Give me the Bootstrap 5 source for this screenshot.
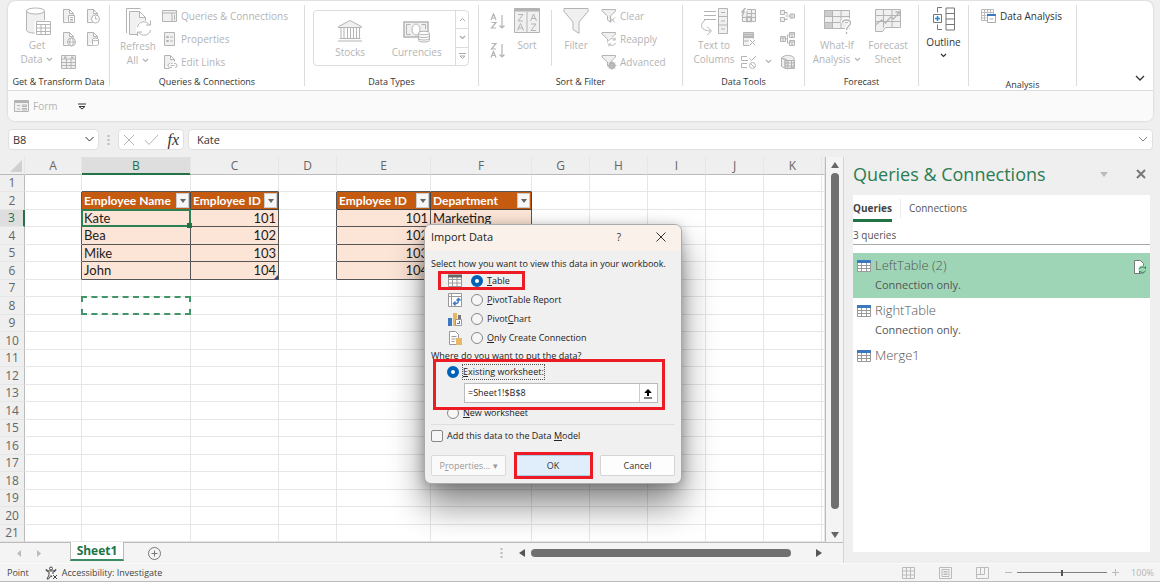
<!DOCTYPE html>
<html lang="en">
<head>
<meta charset="utf-8">
<meta name="viewport" content="width=device-width, initial-scale=1">
<title>Workbook - Import Data</title>
<link href="https://cdn.jsdelivr.net/npm/bootstrap@5.3.0/dist/css/bootstrap.min.css" rel="stylesheet">
<style>
  :root{--ui:"Open Sans","Noto Sans",sans-serif;--cell:Lato,"Open Sans",sans-serif;--green:#217346;--off:#b4b4b4;--rule:#dcdcdc}
  body{background:#efefef;font:10px/14px var(--ui);color:#333;overflow:hidden}
  svg{display:block;fill:none;stroke:currentColor;stroke-width:1;flex:none}
  .btn{--bs-btn-padding-x:0;--bs-btn-padding-y:0;--bs-btn-font-size:10px;--bs-btn-line-height:14px;--bs-btn-border-width:0;--bs-btn-border-radius:2px;--bs-btn-color:#333;--bs-btn-disabled-color:var(--off);--bs-btn-disabled-opacity:1;white-space:nowrap}
  .soft{fill:#f0f0f0}
  .tone-dark{color:#777}.tone-mid{color:#888}.tone-pale{color:#bbb}
  /* ribbon */
  .ribbon{margin:1px 7px 0 8px;background:#fff;border-radius:7px;box-shadow:0 0 2px #bbb}
  .group{height:81px;margin-top:4px;border-right:1px solid var(--rule);position:relative}
  .group-body{height:70px}
  .group-name{font-size:9px;line-height:14px;text-align:center;color:#333;white-space:nowrap}
  .w1{width:102px}.w2{width:195px}.w3{width:174px}.w4{width:204px}.w5{width:122px}.w6{width:114px}.w7{width:50px}.w8{width:108px}
  .big{width:48px;display:flex;flex-direction:column;align-items:center;padding-top:2px}
  .big svg.ic{margin-bottom:3px}
  .big.wide{width:54px}.big.slim{width:42px}
  .stack{display:grid;grid-auto-rows:23px;align-items:center;align-content:start;margin-top:-1px}
  .two{grid-template-columns:16px 16px;column-gap:8px}
  .tools{grid-template-columns:39px 16px}
  .line{display:flex;align-items:center;gap:3px}
  .indent{padding-left:5px}
  .orders{gap:12px;padding:8px 0 0 11px}
  .gallery-wrap{padding:5px 0 0 8px}
  .gallery{width:156px;height:56px;border:1px solid var(--rule);border-radius:4px;padding-left:8px}
  .spin{width:13px;border-left:1px solid var(--rule)}
  .spin .btn{flex:1;display:flex;align-items:center;justify-content:center;color:#aaa}
  .spin .btn+.btn{border-top:1px solid var(--rule);border-radius:0}
  .rule-v{width:1px;height:56px;background:var(--rule);margin:5px 3px 0}
  .quick{height:31px;background:#fafafa;border-top:1px solid var(--rule);border-radius:0 0 7px 7px;padding-left:6px}
  /* formula bar */
  .formula{margin:8px 7px 7px 8px;height:21px}
  .fbox{background:#fff;border:1px solid #e0e0e0;border-radius:4px;height:21px}
  .fbox input{border:0;padding:0;background:none;width:100%;font-size:11px;line-height:17px;color:#333;outline:0}
  .namebox{width:91px}.fxbox{width:66px}
  .fx{font:italic 16px/17px "Liberation Serif",serif}
  /* sheet */
  .sheet{position:relative;overflow:hidden;background:#fff;min-width:0}
  .grid-table{table-layout:fixed;border-collapse:separate;border-spacing:0;width:100%;font-family:var(--cell);font-size:13px;line-height:16px;color:#1c1c1c}
  .grid-table th,.grid-table td{padding:0 2px;border:0 solid #e6e6e6;border-width:0 1px 1px 0;height:17px;position:relative;white-space:nowrap}
  .grid-table th:last-child,.grid-table td:last-child{padding:0}
  .grid-table tbody tr:nth-child(even)>*{height:18px;line-height:17px}
  .grid-table thead th,.grid-table tbody th{background:#efefef;color:#666;font:12px/16px var(--ui);text-align:center}
  .grid-table thead th{border-bottom-color:#bbb;height:18px;line-height:17px}
  .grid-table tbody th{border-right-color:#bbb}
  .grid-table .cur{background:#dedede;color:var(--green)}
  .grid-table thead .cur{box-shadow:inset 0 -1px var(--green);border-bottom-color:var(--green)}
  .grid-table tbody th.cur{border-right:2px solid var(--green)}
  .grid-table .lt{border-right-color:#555}.grid-table .up{border-bottom-color:#555}
  .grid-table .hd{background:#c55a11;color:#fff;font-weight:700;font-size:12px;border-color:#444;padding-right:1px}
  .grid-table .bd{background:#fce4d6;border-color:#555}
  .pick{width:13px;height:15px;background:#f7f7f7;border:1px solid #ccc;padding:0;display:flex;align-items:center;justify-content:center}
  .active-cell::after{content:"";position:absolute;inset:-1px;border:2px solid #2c8055}
  .active-cell::before{content:"";position:absolute;right:-2px;bottom:-2px;width:5px;height:5px;background:var(--green);z-index:2}
  .march::after{content:"";position:absolute;inset:-1px;border:2px dashed #429568}
  .corner::after{content:"";position:absolute;right:0;bottom:0;border:2px solid #2f3f9e;border-top-color:transparent;border-left-color:transparent}
  .c0{width:25px}.ca{width:57px}.cb{width:109px}.cc{width:88px}.cd{width:58px}.ce{width:94px}.cf{width:101px}
  .vbar{width:18px;flex:none;background:#f4f4f4;border-left:1px solid #bbb;padding:5px 0 4px;color:#666}
  .vbar .thumb{width:8px;border-radius:4px;background:#707070;margin:5px 0 23px}
  .solid{fill:currentColor;stroke:none}
  /* tabs */
  .tabs{height:21px;background:#f4f4f4;border-top:1px solid #bbb}
  .sheet-tab{width:54px;height:19px;margin:-1px 0 0;background:#fff;border:solid #bbb;border-width:0 1px;border-bottom:2px solid #3a8a62;color:var(--green);font-weight:700;font-size:12px;line-height:17px;text-align:center;text-decoration:none}
  .hbar{width:303px;margin-right:21px;color:#555}
  .hbar .thumb{height:8px;border-radius:4px;background:#707070;margin:0 25px 0 6px}
  /* pane */
  .pane{width:317px;flex:none;border-left:1px solid #d4d4d4;padding:0 10px 11px 9px;background:#efefef}
  .pane-title{font-size:18px;line-height:26px;font-weight:400;color:#2b7d52;margin:0}
  .pane-body{background:#fff}
  .pane-tab{color:#555;text-decoration:none;line-height:16px;padding:5px 0 3px;border-bottom:3px solid transparent}
  .pane-tab.on{font-weight:700;color:#444;border-color:var(--green)}
  .count{border-bottom:1px solid #aaa;padding:6px 0 2px;line-height:14px;color:#555}
  .query{padding:3px 3px 0 4px;height:45px;color:#6f6f6f;display:flex;gap:4px}
  .query.sel{background:#9fd5b7}
  .qname{font-size:13px;line-height:18px;font-weight:300;color:#555}
  .qnote{font-size:11px;line-height:18px;margin-top:2px;color:#555}
  /* dialog */
  .dialog{position:absolute;left:424px;top:67px;width:258px;background:#f0f0f0;border:1px solid #aaa;border-radius:7px;box-shadow:0 22px 34px rgba(0,0,0,.45),0 2px 12px rgba(0,0,0,.25);font-size:9px;line-height:14px;color:#222}
  .dlg-head{height:26px;background:#f9f1ea;border-radius:6px 6px 0 0;padding:0 14px 2px 6px;font-size:11px}
  .dlg-head .btn+.btn{margin-left:34px}
  .dlg-body{padding:6px 6px 7px}
  .opt{height:19px;display:flex;align-items:center;gap:4px;padding-left:17px;position:relative;width:max-content}
  .opt svg{margin-right:5px}
  .form-check-input{width:12px;height:12px;margin:0;border:1px solid #888;background:#f6f6f6;float:none;flex:none}
  .form-check-input[type=radio]:checked{background:#fff;border:4px solid #0062b8}
  .form-check-input[type=checkbox]{border-radius:2px}
  .hl{position:absolute;border:3px solid #ed1c24;pointer-events:none;z-index:3}
  .hl.t{inset:0 -15px 0 7px}
  .hl.e{inset:1px 10px -1px 2px}
  .hl.o{inset:-3px -2px}
  .where{height:51px;margin:-5px 0 -3px;padding:7px 17px 0 16px}
  .ask{padding-top:2px}
  .focus{outline:1px dotted #555}
  .ref{width:194px;height:20px;margin:4px 0 0 17px;border:1px solid #bbb;background:#fff}
  .ref input{border:0;padding:0 3px;font-size:9px;line-height:16px;color:#222;width:100%;outline:0;min-width:0}
  .ref .btn{width:20px;border-left:1px solid #ccc;border-radius:0}
  .dialog hr{color:#aaa}
  .dbtn{height:21px;width:75px;background:#fdfdfd;--bs-btn-border-width:1px;--bs-btn-border-color:#d4d4d4;--bs-btn-font-size:9px;--bs-btn-disabled-border-color:#dadada;--bs-btn-disabled-color:#999}
  .dbtn:disabled{background:#fafafa}
  .dbtn.ok{background:#dfeefa;border-color:#a9cbe6}
  /* status */
  .status{height:21px;background:#f4f4f4;border-top:1px solid #fafafa;border-bottom:1px solid #bbb;padding:0 6px 0 7px;font-size:9px;color:#444}
  .zoom{appearance:none;width:90px;height:8px;background:linear-gradient(#808080,#808080) center/100% 1px no-repeat;margin:0 5px}
  .zoom::-webkit-slider-thumb{appearance:none;width:2px;height:6px;background:#555}
  .percent{margin-left:12px;color:#b4b4b4}
  .views{gap:24px;margin-right:16px;color:#bbb}
</style>
</head>
<body>
<svg width="0" height="0" class="position-absolute" aria-hidden="true">
  <symbol id="dn" viewBox="0 0 7 5"><path d="M1 1l2.500 2.500L6 1" stroke-width="1.200"/></symbol>
  <symbol id="page" viewBox="0 0 16 16"><path class="soft" d="M2.500 14.500V1.500h6l4 4v2M2.500 14.500h5M8.500 1.500v4h4"/></symbol>
  <symbol id="funnel" viewBox="0 0 16 16"><path class="soft" d="M1 1.500h13.500v1.500L9.500 8v6l-3-2V8L1 3z"/></symbol>
  <symbol id="tbl" viewBox="0 0 14 12"><path fill="#fff" stroke="#999" d="M.5.5h13v11H.5zM.5 5.500h13M.5 8.500h13M4.500 3v8.500M9.500 3v8.500"/><path d="M0 1.500h14" stroke="#3c78bd" stroke-width="3"/></symbol>
</svg>

<div class="d-flex flex-column vh-100">
<header class="ribbon">
  <div class="d-flex">
    <section class="group w1">
      <div class="group-body d-flex indent">
        <button class="btn big" disabled>
          <svg class="ic" width="28" height="28" viewBox="0 0 28 28"><path class="soft" d="M3.500 4v19c0 2 3 3 8 3V14h10V4z" stroke="none"/><path d="M3.500 4v19c0 2 4 3 8 3M21.500 4v9"/><ellipse cx="12.500" cy="4" rx="9" ry="3" fill="#fff"/><path fill="#fff" d="M13.500 14.500h14v13h-14zM13.500 17.500h14M13.500 21h14M13.500 24.500h14M18 17.500v10M22.500 17.500v10"/></svg>
          <span>Get</span><span class="d-flex align-items-center gap-1">Data <svg width="7" height="5"><use href="#dn"/></svg></span>
        </button>
        <div class="stack two">
          <button class="btn" disabled aria-label="From Text"><svg width="16" height="16"><use href="#page"/><path fill="#fff" d="M7.500 7.500h6v7h-6zM9 9.500h3M9 11.500h3M9 13h3"/></svg></button>
          <button class="btn" disabled aria-label="Recent Sources"><svg width="16" height="16"><use href="#page"/><circle cx="10.500" cy="11" r="4" fill="#fff"/><path d="M10.500 8.500V11h2"/></svg></button>
          <button class="btn" disabled aria-label="From Web"><svg width="16" height="16"><use href="#page"/><circle cx="10.500" cy="11" r="4" fill="#fff"/><ellipse cx="10.500" cy="11" rx="1.800" ry="4"/><path d="M6.500 11h8"/></svg></button>
          <button class="btn" disabled aria-label="Existing Connections"><svg width="16" height="16"><use href="#page"/><path fill="#fff" d="M7.500 8.500v5c0 1.500 6 1.500 6 0v-5"/><ellipse cx="10.500" cy="8.500" rx="3" ry="1.300" fill="#fff"/></svg></button>
          <button class="btn" disabled aria-label="From Table"><svg width="16" height="16"><path class="soft" d="M.5 1.500h14v13H.5zM.5 5h14M.5 8.500h14M.5 11.500h14M5.500 5v9.500M10 5v9.500"/><path d="M3 3.500h2.500M10 3.500h2.500" stroke-width="2"/></svg></button>
        </div>
      </div>
      <div class="group-name">Get &amp; Transform Data</div>
    </section>
    <section class="group w2">
      <div class="group-body d-flex">
        <button class="btn big ms-1" disabled>
          <svg class="ic" width="28" height="29" viewBox="0 0 28 29"><path d="M2.500 26V1.500h14"/><path class="soft" d="M13 27.500H5.500v-23h10l6 6V15M15.500 4.500v6h6"/><circle cx="20" cy="21.500" r="8" fill="#fff" stroke="none"/><path d="M13.500 20c1-6 9-7 12-2M26.500 13.500V18H22M26.500 23c-1 6-9 7-12 2M13.500 29.500V25H18"/></svg>
          <span>Refresh</span><span class="d-flex align-items-center gap-1">All <svg width="7" height="5"><use href="#dn"/></svg></span>
        </button>
        <div class="stack">
          <button class="btn line" disabled><svg width="16" height="16"><path class="soft" d="M.5 2.500h14v11H.5zM.5 5h14M10 5v8.500"/><path d="M12.500 7v5"/></svg>Queries &amp; Connections</button>
          <button class="btn line" disabled><svg width="16" height="16"><path class="soft" d="M2.500 1.500h10v13h-10z"/><path d="M4.500 5.500h2v1h-2zM4.500 9.500h2v1h-2zM8 6h3M8 10h3"/></svg>Properties</button>
          <button class="btn line" disabled><svg width="16" height="16"><use href="#page"/><path fill="#fff" d="M8 9.500a2 2 0 000 4h2M12 9.500h1a2 2 0 010 4M8.500 11.500h4M9 9.500h1.500"/></svg>Edit Links</button>
        </div>
      </div>
      <div class="group-name">Queries &amp; Connections</div>
    </section>
    <section class="group w3">
      <div class="group-body gallery-wrap">
        <div class="gallery d-flex">
          <button class="btn flex-fill d-flex flex-column align-items-center pt-2" disabled><svg width="26" height="26" viewBox="0 0 26 26"><path class="soft" d="M1.500 7.500L13 1.500l11.500 6v1h-23zM4 8.500v11M7 8.500v11M10.500 8.500v11M13.500 8.500v11M16.500 8.500v11M19.500 8.500v11M22.500 8.500v11M2.500 19.500h21M1 22h24"/></svg>Stocks</button>
          <button class="btn flex-fill d-flex flex-column align-items-center pt-2" disabled><svg width="28" height="26" viewBox="0 0 28 26"><path class="soft" stroke-width="1.500" d="M1 3h24v15H1z"/><path d="M3.500 5.500h4M3.500 5.500v10h4M22.500 5.500h-4M22.500 5.500V10"/><ellipse cx="13" cy="10.500" rx="4" ry="5.500" fill="#fff"/><path fill="#fff" d="M15.500 14.500v7c0 2 11 2 11 0v-7"/><ellipse cx="21" cy="14" rx="5.500" ry="1.800" fill="#fff"/><path d="M15.500 17c0 2 11 2 11 0M15.500 19.500c0 2 11 2 11 0"/></svg>Currencies</button>
          <div class="spin d-flex flex-column">
            <button class="btn" aria-label="Up"><svg width="7" height="5"><path d="M1 4l2.500-2.500L6 4"/></svg></button>
            <button class="btn" aria-label="Down"><svg width="7" height="5"><use href="#dn"/></svg></button>
            <button class="btn" aria-label="More"><svg width="7" height="7"><path d="M0 .5h7M1 3l2.500 2.500L6 3z"/></svg></button>
          </div>
        </div>
      </div>
      <div class="group-name">Data Types</div>
    </section>
    <section class="group w4">
      <div class="group-body d-flex">
        <div class="orders d-flex flex-column">
          <button class="btn" disabled aria-label="Sort A to Z"><svg width="16" height="17"><path d="M1 7L3.500.8 6 7M2 5h3M1.500 9.500H6l-4.500 5.500H6M12 2v13M9.500 12.500L12 15l2.500-2.500" stroke-width="1.200"/></svg></button>
          <button class="btn" disabled aria-label="Sort Z to A"><svg width="16" height="17"><path d="M1.500 1.500H6L1.500 7H6M1 15.500l2.500-6 2.500 6M2 13.500h3M12 2v13M9.500 12.500L12 15l2.500-2.500" stroke-width="1.200"/></svg></button>
        </div>
        <button class="btn big slim" disabled><svg class="ic" width="26" height="28" viewBox="0 0 26 28"><path class="soft" d="M.5 1.500h25v24H.5zM13 5v20.500"/><path d="M0 3h26" stroke-width="3"/><path d="M4 7.500h5L4 14h5M3.500 23.500l3-7 3 7M4.500 21h4M16.500 14l3-7 3 7M17.500 11.500h4M17 17h5l-5 6.500h5"/></svg>Sort</button>
        <div class="rule-v"></div>
        <button class="btn big slim" disabled><svg class="ic" width="26" height="28" viewBox="0 0 26 28"><path class="soft" d="M1 1.500h24v3L16 15v11.500l-6-4V15L1 4.500z"/></svg>Filter</button>
        <div class="stack ms-1">
          <button class="btn line" disabled><svg width="16" height="16"><use href="#funnel"/><path d="M9 9.500l5 5M14 9.500l-5 5"/></svg>Clear</button>
          <button class="btn line" disabled><svg width="16" height="16"><use href="#funnel"/><circle cx="11" cy="11" r="4.500" fill="#fff" stroke="none"/><path d="M7.500 10c1-3 5-3 6.500-1V6.500M14.500 9H12M14.500 12c-1 3-5 3-6.500 1v2.500M7.500 13H10"/></svg>Reapply</button>
          <button class="btn line" disabled><svg width="16" height="16"><use href="#funnel"/><circle cx="11" cy="11.500" r="2.500" fill="#fff" stroke-width="2"/><path d="M11 7v9M6.500 11.500h9M8 8.500l6 6M14 8.500l-6 6"/></svg>Advanced</button>
        </div>
      </div>
      <div class="group-name">Sort &amp; Filter</div>
    </section>
    <section class="group w5">
      <div class="group-body d-flex">
        <button class="btn big ms-1 wide" disabled><svg class="ic" width="28" height="28" viewBox="0 0 28 28"><path class="soft" d="M18.500 1.500h9v25h-9zM18.500 9.500h9M18.500 18h9M21 5.500h4M21 14h4M21 22h4"/><path d="M4 4.500h12M4 8.500h12M4 12.500h12M5 13c-6 5-4 11 6 11M7 19.500l4.500 4.500L7 28"/></svg><span>Text to</span><span>Columns</span></button>
        <div class="stack tools">
          <button class="btn" disabled aria-label="Flash Fill"><svg width="16" height="16"><path class="soft" d="M6 1.500h8.500v12H1.500V8M1.500 9.500h13M6 5.500h8.500M6 3v10.500M10.500 1.500v12"/><path d="M4.500 0L1 4h2L1 8M6 13.500V9h4v4.500z" stroke-width="1.500"/></svg></button>
          <button class="btn" disabled aria-label="Consolidate"><svg width="16" height="16"><path class="soft" d="M.5 2.500h4v4h-4zM.5 9.500h4v4h-4zM10 6h4.500v4H10zM4.500 4.500H7v2M4.500 11.500H7V10M5.500 8H10M12 6v4"/></svg></button>
          <button class="btn" disabled aria-label="Remove Duplicates"><svg width="16" height="16"><path class="soft" d="M2.500 1.500h10v13h-10zM2.500 10h6"/><path d="M3 3.500h9M3 6h9" stroke-width="2"/><circle cx="11.500" cy="11.500" r="4" fill="#fff" stroke="none"/><path d="M9 9l5 5M14 9l-5 5"/></svg></button>
          <button class="btn" disabled aria-label="Relationships"><svg width="16" height="16"><path d="M5.500 8h2V4h2M7.500 8v4h2"/><path class="soft" d="M.5 5.500h5v5h-5zM9.500 1.500h5v5h-5zM9.500 9.500h5v5h-5zM9.500 3h5M9.500 11h5M.5 7h5M3 7v3.500M12 3v3.500M12 11v3.500"/></svg></button>
          <button class="btn d-flex align-items-center" disabled aria-label="Data Validation"><svg width="16" height="16"><path d="M6 2.500H.5v4H7M6 9.500H.5v4H6M8.500 4.500l2 2L15 2"/><circle cx="11.500" cy="11.500" r="3"/><path d="M9.500 9.500l4 4"/></svg><svg class="ms-2" width="7" height="5"><use href="#dn"/></svg></button>
          <button class="btn" disabled aria-label="Data Model"><svg width="16" height="16"><path class="soft" d="M1.500 4v8.500L5 14V6zM1.500 4C5 0 12 1 14 4v9l-7 2V5.500z"/><path d="M5 6.500h9.500v8H5zM5 9h9.500M5 12h9.500M8 6.500v8M11.500 6.500v8"/></svg></button>
        </div>
      </div>
      <div class="group-name">Data Tools</div>
    </section>
    <section class="group w6">
      <div class="group-body d-flex indent">
        <button class="btn big wide" disabled><svg class="ic" width="28" height="28" viewBox="0 0 28 28"><path class="soft" d="M1.500 3.500h25v18h-25z"/><path fill="#ccc" d="M1.500 3.500h8v6h-8zM1.500 15.500h8v6h-8z"/><path d="M1.500 9.500h25M1.500 15.500h25M9.500 3.500v18M18 3.500v18"/><path d="M19.500 16c0-4 8-4 8 0 0 3-4 3-4 7" stroke="#fff" stroke-width="4"/><path d="M19.500 16c0-4 8-4 8 0 0 3-4 3-4 7M23.500 25v2" stroke-width="1.300"/></svg><span>What-If</span><span class="d-flex align-items-center gap-1">Analysis <svg width="7" height="5"><use href="#dn"/></svg></span></button>
        <button class="btn big" disabled><svg class="ic" width="28" height="28" viewBox="0 0 28 28"><path class="soft" d="M1.500 2.500h25v18h-15l-3 4h-7zM1.500 8.500h25M1.500 14.500h25M9.500 2.500v18M18 2.500v18"/><path d="M1.500 18l6-5 4 3 5-6 3 2 6-7M21.500 5H26v4" stroke-width="1.300"/></svg><span>Forecast</span><span>Sheet</span></button>
      </div>
      <div class="group-name">Forecast</div>
    </section>
    <section class="group w7">
      <button class="btn big w-100"><svg class="ic tone-dark" width="24" height="25" viewBox="0 0 24 25"><path fill="#fff" d="M14 1h8.500v22H14zM14 6.500h8.500M14 12h8.500M14 17.500h8.500"/><path d="M10 .5H5.500v5M10 22.500H5.500v-5"/><path fill="#fff" d="M1.500 7.500h8v8h-8z"/><path d="M5.500 9v5M3 11.500h5" stroke="#1c8ad0" stroke-width="1.500"/></svg>Outline<svg class="mt-1" width="7" height="5"><use href="#dn"/></svg></button>
    </section>
    <section class="group w8">
      <div class="group-body stack ps-2 mb-1">
        <button class="btn line ms-1"><svg width="16" height="16"><path stroke="#bbb" d="M.5 1.500h12v11H.5zM.5 4.500h12M.5 7.500h5M.5 10h5M3.500 1.500v11M6.500 1.500v4M9.500 1.500v4"/><path fill="#fff" stroke="#aaa" d="M6.500 6.500h8v8h-8zM8.500 11h4"/><path d="M6 7h9" stroke="#3c78bd" stroke-width="2"/></svg>Data Analysis</button>
      </div>
      <div class="group-name">Analysis</div>
    </section>
    <div class="flex-grow-1 d-flex align-items-end justify-content-end pe-2 pb-1">
      <button class="btn" aria-label="Ribbon options"><svg width="10" height="7"><path d="M1 1l4 4 4-4" stroke-width="1.300"/></svg></button>
    </div>
  </div>
  <div class="quick d-flex align-items-center mt-1">
    <button class="btn line" disabled><svg width="16" height="14"><path class="soft" d="M.5 1.500h14v11H.5z"/><path d="M.5 3h14" stroke-width="2"/><path d="M3 6.500h3M3 10h3M8.500 6h4v1.500h-4zM8.500 9.500h4V11h-4z"/></svg>Form</button>
    <button class="btn ms-3 ps-1" aria-label="Customize"><svg width="8" height="7"><path d="M0 1h8"/><path d="M1 3.500h6L4 6z"/></svg></button>
  </div>
</header>

<div class="formula d-flex align-items-center">
  <div class="fbox namebox d-flex align-items-center px-1"><input value="B8" aria-label="Name box"><svg width="9" height="7"><path d="M.5 1l4 4 4-4"/></svg></div>
  <svg class="mx-2 tone-pale" width="3" height="12"><path d="M1.500 1v11" stroke-width="2" stroke-dasharray="2 2"/></svg>
  <div class="fbox fxbox d-flex align-items-center justify-content-between px-1">
    <button class="btn" disabled aria-label="Cancel entry"><svg width="12" height="12"><path d="M1 1l10 10M11 1L1 11"/></svg></button>
    <button class="btn" disabled aria-label="Enter"><svg width="15" height="12"><path d="M1 6l4 4.500L14 1"/></svg></button>
    <button class="btn fx" aria-label="Insert function">fx</button>
  </div>
  <div class="fbox flex-grow-1 ms-1 d-flex align-items-center ps-2 pe-1"><input value="Kate" aria-label="Formula"><svg class="tone-mid" width="10" height="7"><path d="M1 1l4 4 4-4"/></svg></div>
</div>

<main class="d-flex flex-grow-1">
  <div class="d-flex flex-column flex-grow-1 overflow-hidden">
    <div class="d-flex flex-grow-1 overflow-hidden">
      <div class="sheet flex-grow-1">
        <table class="grid-table">
          <colgroup><col class="c0"><col class="ca"><col class="cb"><col class="cc"><col class="cd"><col class="ce"><col class="cf"><col class="cd"><col class="cd"><col class="cd"><col class="cd"><col class="cd"><col></colgroup>
          <thead><tr id="heads"></tr></thead>
          <tbody id="rows"></tbody>
        </table>
        <form class="dialog" onsubmit="return false">
          <div class="dlg-head d-flex align-items-center"><span class="me-auto">Import Data</span>
            <button class="btn" type="button">?</button>
            <button class="btn" type="button" aria-label="Close"><svg width="12" height="12"><path d="M1.500 1.500l9 9M10.500 1.500l-9 9"/></svg></button></div>
          <div class="dlg-body">
            <div>Select how you want to view this data in your workbook.</div>
            <div class="opt"><svg width="14" height="14"><path fill="#fff" stroke="#999" d="M.5 1.500h13v11H.5zM.5 5.500h13M.5 9h13M4.500 3v9.500M9 3v9.500"/><path d="M0 2h14" stroke="#666" stroke-width="3"/></svg><input class="form-check-input" type="radio" name="v" id="v1" checked><label for="v1"><u>T</u>able</label><span class="hl t"></span></div>
            <div class="opt"><svg width="14" height="14"><path fill="#fff" stroke="#999" d="M.5.500h13v13H.5zM.5 3.500h13M3.500.5v13"/><path stroke="#3c78bd" stroke-width="1.400" d="M6 10.500h2.500c2 0 2-2 2-4.500M8.500 7.500l2-2 2 2M7.500 8.500l-2 2 2 2"/></svg><input class="form-check-input" type="radio" name="v" id="v2"><label for="v2"><u>P</u>ivotTable Report</label></div>
            <div class="opt"><svg width="14" height="14"><g stroke="none"><path fill="#3c78bd" d="M0 6h4v8H0z"/><path fill="#e8b765" d="M5 1h4v13H5z"/><path fill="#777" d="M10 3h3v4h-3z"/></g><path fill="#fff" stroke="#999" d="M7.500 7.500h6v6h-6z"/><path stroke="#3c78bd" d="M9 11.500h2.500V9"/></svg><input class="form-check-input" type="radio" name="v" id="v3"><label for="v3">Pivot<u>C</u>hart</label></div>
            <div class="opt"><svg width="14" height="14"><path fill="#fff" stroke="#999" d="M1.500.5h6l3 3v10h-9zM3.500 5.500h5M3.500 8h4M3.500 10.500h3"/><path fill="#e8b765" stroke="none" d="M8 7h6v7H8z"/></svg><input class="form-check-input" type="radio" name="v" id="v4"><label for="v4"><u>O</u>nly Create Connection</label></div>
            <div class="ask">Where do you want to put the data?</div>
            <div class="where position-relative">
              <div class="d-flex align-items-center gap-1"><input class="form-check-input" type="radio" name="w" id="w1" checked><label class="focus" for="w1"><u>E</u>xisting worksheet:</label></div>
              <div class="ref d-flex"><input value="=Sheet1!$B$8" aria-label="Cell reference"><button class="btn" type="button" aria-label="Collapse dialog"><svg class="mx-auto" width="10" height="11"><g stroke="#000"><path stroke-width="2" d="M5 8V2"/><path fill="#000" d="M2 4.500L5 1.500l3 3z"/><path d="M1 10h8"/></g></svg></button></div>
              <span class="hl e"></span>
            </div>
            <div class="d-flex align-items-center gap-1 ps-3"><input class="form-check-input" type="radio" name="w" id="w2"><label for="w2"><u>N</u>ew worksheet</label></div>
            <hr class="my-1">
            <div class="d-flex align-items-center gap-1"><input class="form-check-input" type="checkbox" id="m"><label for="m">Add this data to the Data <u>M</u>odel</label></div>
            <div class="d-flex justify-content-between mt-2 pt-1">
              <button class="btn dbtn" type="button" disabled>P<u>r</u>operties... <span aria-hidden="true">▾</span></button>
              <span class="position-relative"><button class="btn dbtn ok">OK</button><span class="hl o"></span></span>
              <button class="btn dbtn" type="button">Cancel</button>
            </div>
          </div>
        </form>
      </div>
      <div class="vbar d-flex flex-column align-items-center">
        <svg class="solid" width="8" height="6"><path d="M4 0l4 6H0z"/></svg>
        <div class="thumb flex-grow-1"></div>
        <svg class="solid" width="8" height="6"><path d="M4 6L0 0h8z"/></svg>
      </div>
    </div>
    <div class="tabs d-flex align-items-center">
      <div class="d-flex align-items-center gap-3 tone-pale ps-3 me-4"><svg class="solid" width="5" height="7"><path d="M5 0v7L1 3.500z"/></svg><svg class="solid" width="5" height="7"><path d="M0 0v7l4-3.500z"/></svg></div>
      <a class="sheet-tab align-self-start ms-1" href="#">Sheet1</a>
      <button class="btn ms-4" aria-label="New sheet"><svg class="tone-dark" width="13" height="13"><circle cx="6.500" cy="6.500" r="6"/><path d="M6.500 3.500v6M3.500 6.500h6"/></svg></button>
      <svg class="ms-auto me-3 tone-pale" width="3" height="12"><path d="M1.500 1v11" stroke-width="2" stroke-dasharray="2 2"/></svg>
      <div class="hbar d-flex align-items-center"><svg class="solid" width="6" height="8"><path d="M6 0v8L0 4z"/></svg><div class="thumb flex-grow-1"></div><svg class="solid" width="6" height="8"><path d="M0 0v8l6-4z"/></svg></div>
    </div>
  </div>
  <aside class="pane d-flex flex-column">
    <div class="d-flex align-items-center pt-1 pb-2">
      <h2 class="pane-title me-auto">Queries &amp; Connections</h2>
      <svg class="solid me-4" width="8" height="5"><path fill="#bbb" d="M0 0h8L4 5z"/></svg>
      <button class="btn ms-1 me-1" aria-label="Close pane"><svg class="tone-dark" width="10" height="10"><path d="M1 1l8 8M9 1L1 9" stroke-width="2"/></svg></button>
    </div>
    <div class="pane-body flex-grow-1 d-flex flex-column">
      <nav class="d-flex"><a class="pane-tab on" href="#">Queries</a><span class="border-start border-secondary-subtle mx-2 my-1"></span><a class="pane-tab" href="#">Connections</a></nav>
      <div class="count mb-2">3 queries</div>
      <div class="query sel"><svg class="mt-1" width="14" height="12"><use href="#tbl"/></svg><div class="me-auto"><div class="qname">LeftTable (2)</div><div class="qnote">Connection only.</div></div><svg class="mt-1" width="14" height="14"><path fill="#fff" stroke="#777" d="M1.500.5h6l3 3v10h-9z"/><circle cx="9.500" cy="9.500" r="4" fill="#9fd5b7" stroke="none"/><path stroke="#2b7d52" d="M6.500 9c1-3 5-2 6-.5V6.500M12.500 10.500c-1 3-5 2-6 .5v2"/></svg></div>
      <div class="query"><svg class="mt-1" width="14" height="12"><use href="#tbl"/></svg><div><div class="qname">RightTable</div><div class="qnote">Connection only.</div></div></div>
      <div class="query"><svg class="mt-1" width="14" height="12"><use href="#tbl"/></svg><div class="qname">Merge1</div></div>
    </div>
  </aside>
</main>

<footer class="status d-flex align-items-center">
  <span>Point</span>
  <svg class="ms-3 me-1" width="13" height="14"><circle cx="6" cy="2.500" r="1.500"/><path d="M1 3.500c3 2 7 2 10 0M1 3.500l.5 1.500L4 6v3l-2 4h1.500L6 9.500 7 11M11 3.500L10.500 5 8 6v2M8 9l4 4M12 9l-4 4"/></svg>
  <span class="me-auto">Accessibility: Investigate</span>
  <div class="views d-flex">
    <svg width="13" height="12"><path d="M.5.5h12v11H.5zM.5 4h12M.5 8h12M4.500.5v11M8.500.5v11"/></svg>
    <svg width="13" height="12"><path d="M.5.5h12v11H.5zM3 2.500h7v7H3zM4.500 4.500h4M4.500 6h4M4.500 7.500h4"/></svg>
    <svg width="13" height="12"><path d="M.5.5h12v11H.5zM.5 7.500h8M4.500.5v7M8.500.5v7"/></svg>
  </div>
  <svg class="tone-pale" width="7" height="7"><path d="M0 3.500h7"/></svg>
  <input class="zoom" type="range" aria-label="Zoom">
  <svg class="tone-pale" width="7" height="7"><path d="M0 3.500h7M3.500 0v7"/></svg>
  <span class="percent">100%</span>
</footer>
</div>

<script>
  const letters = 'ABCDEFGHIJK'.split('');
  const data = {
    2: {B:'Employee Name', C:'Employee ID', E:'Employee ID', F:'Department'},
    3: {B:'Kate', C:'101', E:'101', F:'Marketing'},
    4: {B:'Bea',  C:'102', E:'102', F:''},
    5: {B:'Mike', C:'103', E:'103', F:''},
    6: {B:'John', C:'104', E:'104', F:''}
  };
  document.getElementById('heads').innerHTML =
    '<th aria-label="Select all"><svg class="ms-auto" width="12" height="12"><path fill="#d0d0d0" stroke="none" d="M12 0v12H0z"/></svg></th>' +
    letters.map(l => `<th scope="col" class="${l === 'B' ? 'cur' : ''}">${l}</th>`).join('') + '<th></th>';
  const arrow = '<button class="pick" aria-label="Filter"><svg class="solid" width="6" height="4"><path fill="#666" d="M0 0h6L3 4z"/></svg></button>';
  let html = '';
  for (let r = 1; r <= 21; r++) {
    html += `<tr><th scope="row" class="${r === 3 ? 'cur' : ''}">${r}</th>`;
    for (const l of letters) {
      const has = data[r] && l in data[r], v = has ? data[r][l] : '', cls = [];
      if (has) cls.push(r === 2 ? 'hd' : 'bd');
      if (r >= 2 && r <= 6 && (l === 'A' || l === 'D')) cls.push('lt');
      if (r === 1 && 'BCEF'.includes(l)) cls.push('up');
      if (/^\d+$/.test(v)) cls.push('text-end');
      if (r === 3 && l === 'B') cls.push('active-cell');
      if (r === 8 && l === 'B') cls.push('march');
      if (r === 6 && l === 'C') cls.push('corner');
      html += `<td class="${cls.join(' ')}">` + (has && r === 2 ? `<div class="d-flex justify-content-between align-items-center">${v}${arrow}</div>` : v) + '</td>';
    }
    html += '<td></td></tr>';
  }
  document.getElementById('rows').innerHTML = html;
</script>
<script src="https://cdn.jsdelivr.net/npm/bootstrap@5.3.0/dist/js/bootstrap.bundle.min.js"></script>
</body>
</html>
